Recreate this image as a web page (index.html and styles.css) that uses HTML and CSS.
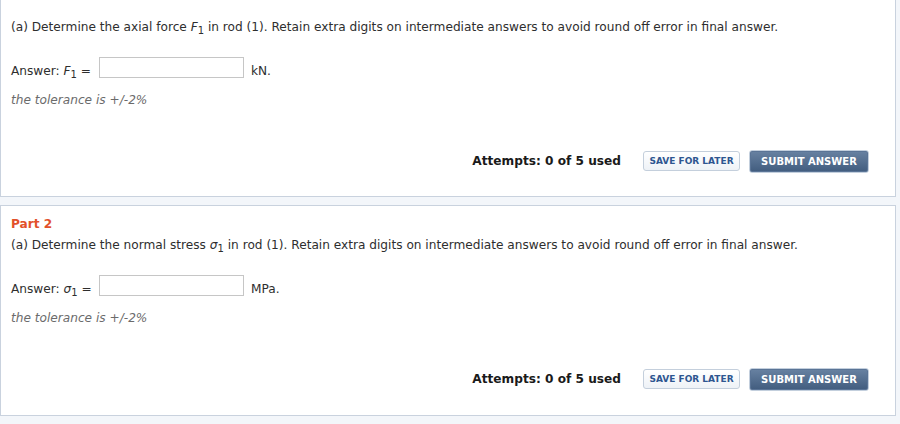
FILE: index.html
```html
<!DOCTYPE html>
<html>
<head>
<meta charset="utf-8">
<link rel="stylesheet" href="styles.css">
</head>
<body>
<div class="panel first">
  <div class="question">(a) Determine the axial force <i>F</i><sub>1</sub> in rod (1). Retain extra digits on intermediate answers to avoid round off error in final answer.</div>
  <div class="answer-row">
    <span class="label">Answer: <i>F</i><sub>1</sub> =</span>
    <span class="input"></span>
    <span class="unit">kN.</span>
  </div>
  <div class="tolerance">the tolerance is +/-2%</div>
  <div class="actions">
    <span class="attempts">Attempts: 0 of 5 used</span>
    <span class="btn save">SAVE FOR LATER</span>
    <span class="btn submit">SUBMIT ANSWER</span>
  </div>
</div>
<div class="panel second">
  <div class="part">Part 2</div>
  <div class="question">(a) Determine the normal stress <i>σ</i><sub>1</sub> in rod (1). Retain extra digits on intermediate answers to avoid round off error in final answer.</div>
  <div class="answer-row">
    <span class="label">Answer: <i>σ</i><sub>1</sub> =</span>
    <span class="input"></span>
    <span class="unit">MPa.</span>
  </div>
  <div class="tolerance">the tolerance is +/-2%</div>
  <div class="actions">
    <span class="attempts">Attempts: 0 of 5 used</span>
    <span class="btn save">SAVE FOR LATER</span>
    <span class="btn submit">SUBMIT ANSWER</span>
  </div>
</div>
</body>
</html>
```
FILE: styles.css
```css
html, body {
  margin: 0;
  padding: 0;
  background: #f3f6fa;
}
body {
  font-family: "DejaVu Sans", Verdana, sans-serif;
  font-size: 12.15px;
  color: #2e2e2e;
  width: 900px;
  height: 424px;
  overflow: hidden;
}
.panel {
  box-sizing: border-box;
  width: 896px;
  background: #fff;
  border: 1px solid #c9d2de;
  padding: 8px 26px 24px 10px;
}
.panel.first {
  margin-top: -1px;
  padding-top: 17px;
  padding-bottom: 23px;
}
.panel.second {
  margin-top: 8px;
}
.part {
  color: #e2512a;
  font-weight: bold;
  line-height: 21px;
}
.question {
  line-height: 20px;
}
sub {
  font-size: 10px;
  vertical-align: -3px;
  line-height: 0;
}
.answer-row {
  display: flex;
  align-items: flex-end;
  margin-top: 20px;
  height: 21px;
}
.label,
.unit {
  line-height: 14px;
}
.label {
  width: 88px;
}
.input {
  box-sizing: border-box;
  width: 145px;
  height: 21px;
  border: 1px solid #c6c6c6;
  background: #fff;
}
.unit {
  margin-left: 7px;
}
.tolerance {
  margin-top: 12px;
  line-height: 20px;
  font-style: italic;
  color: #6b6b6b;
}
.actions {
  display: flex;
  justify-content: flex-end;
  align-items: center;
  height: 24px;
  margin-top: 39px;
}
.attempts {
  font-weight: bold;
  color: #1a1a1a;
  margin-right: 22px;
}
.btn {
  box-sizing: border-box;
  display: flex;
  align-items: center;
  justify-content: center;
  font-weight: bold;
  border-radius: 3px;
}
.save {
  width: 97px;
  height: 20px;
  font-size: 9px;
  color: #2e5690;
  background: linear-gradient(#ffffff, #eef2f7);
  border: 1px solid #c4cfdc;
  margin-right: 9px;
}
.submit {
  width: 120px;
  height: 23px;
  font-size: 10px;
  color: #fff;
  background: linear-gradient(#6882a2, #415c7e);
  border: 1px solid #c3cfdd;
  box-shadow: inset 0 0 0 1px #5a7496;
}
```
